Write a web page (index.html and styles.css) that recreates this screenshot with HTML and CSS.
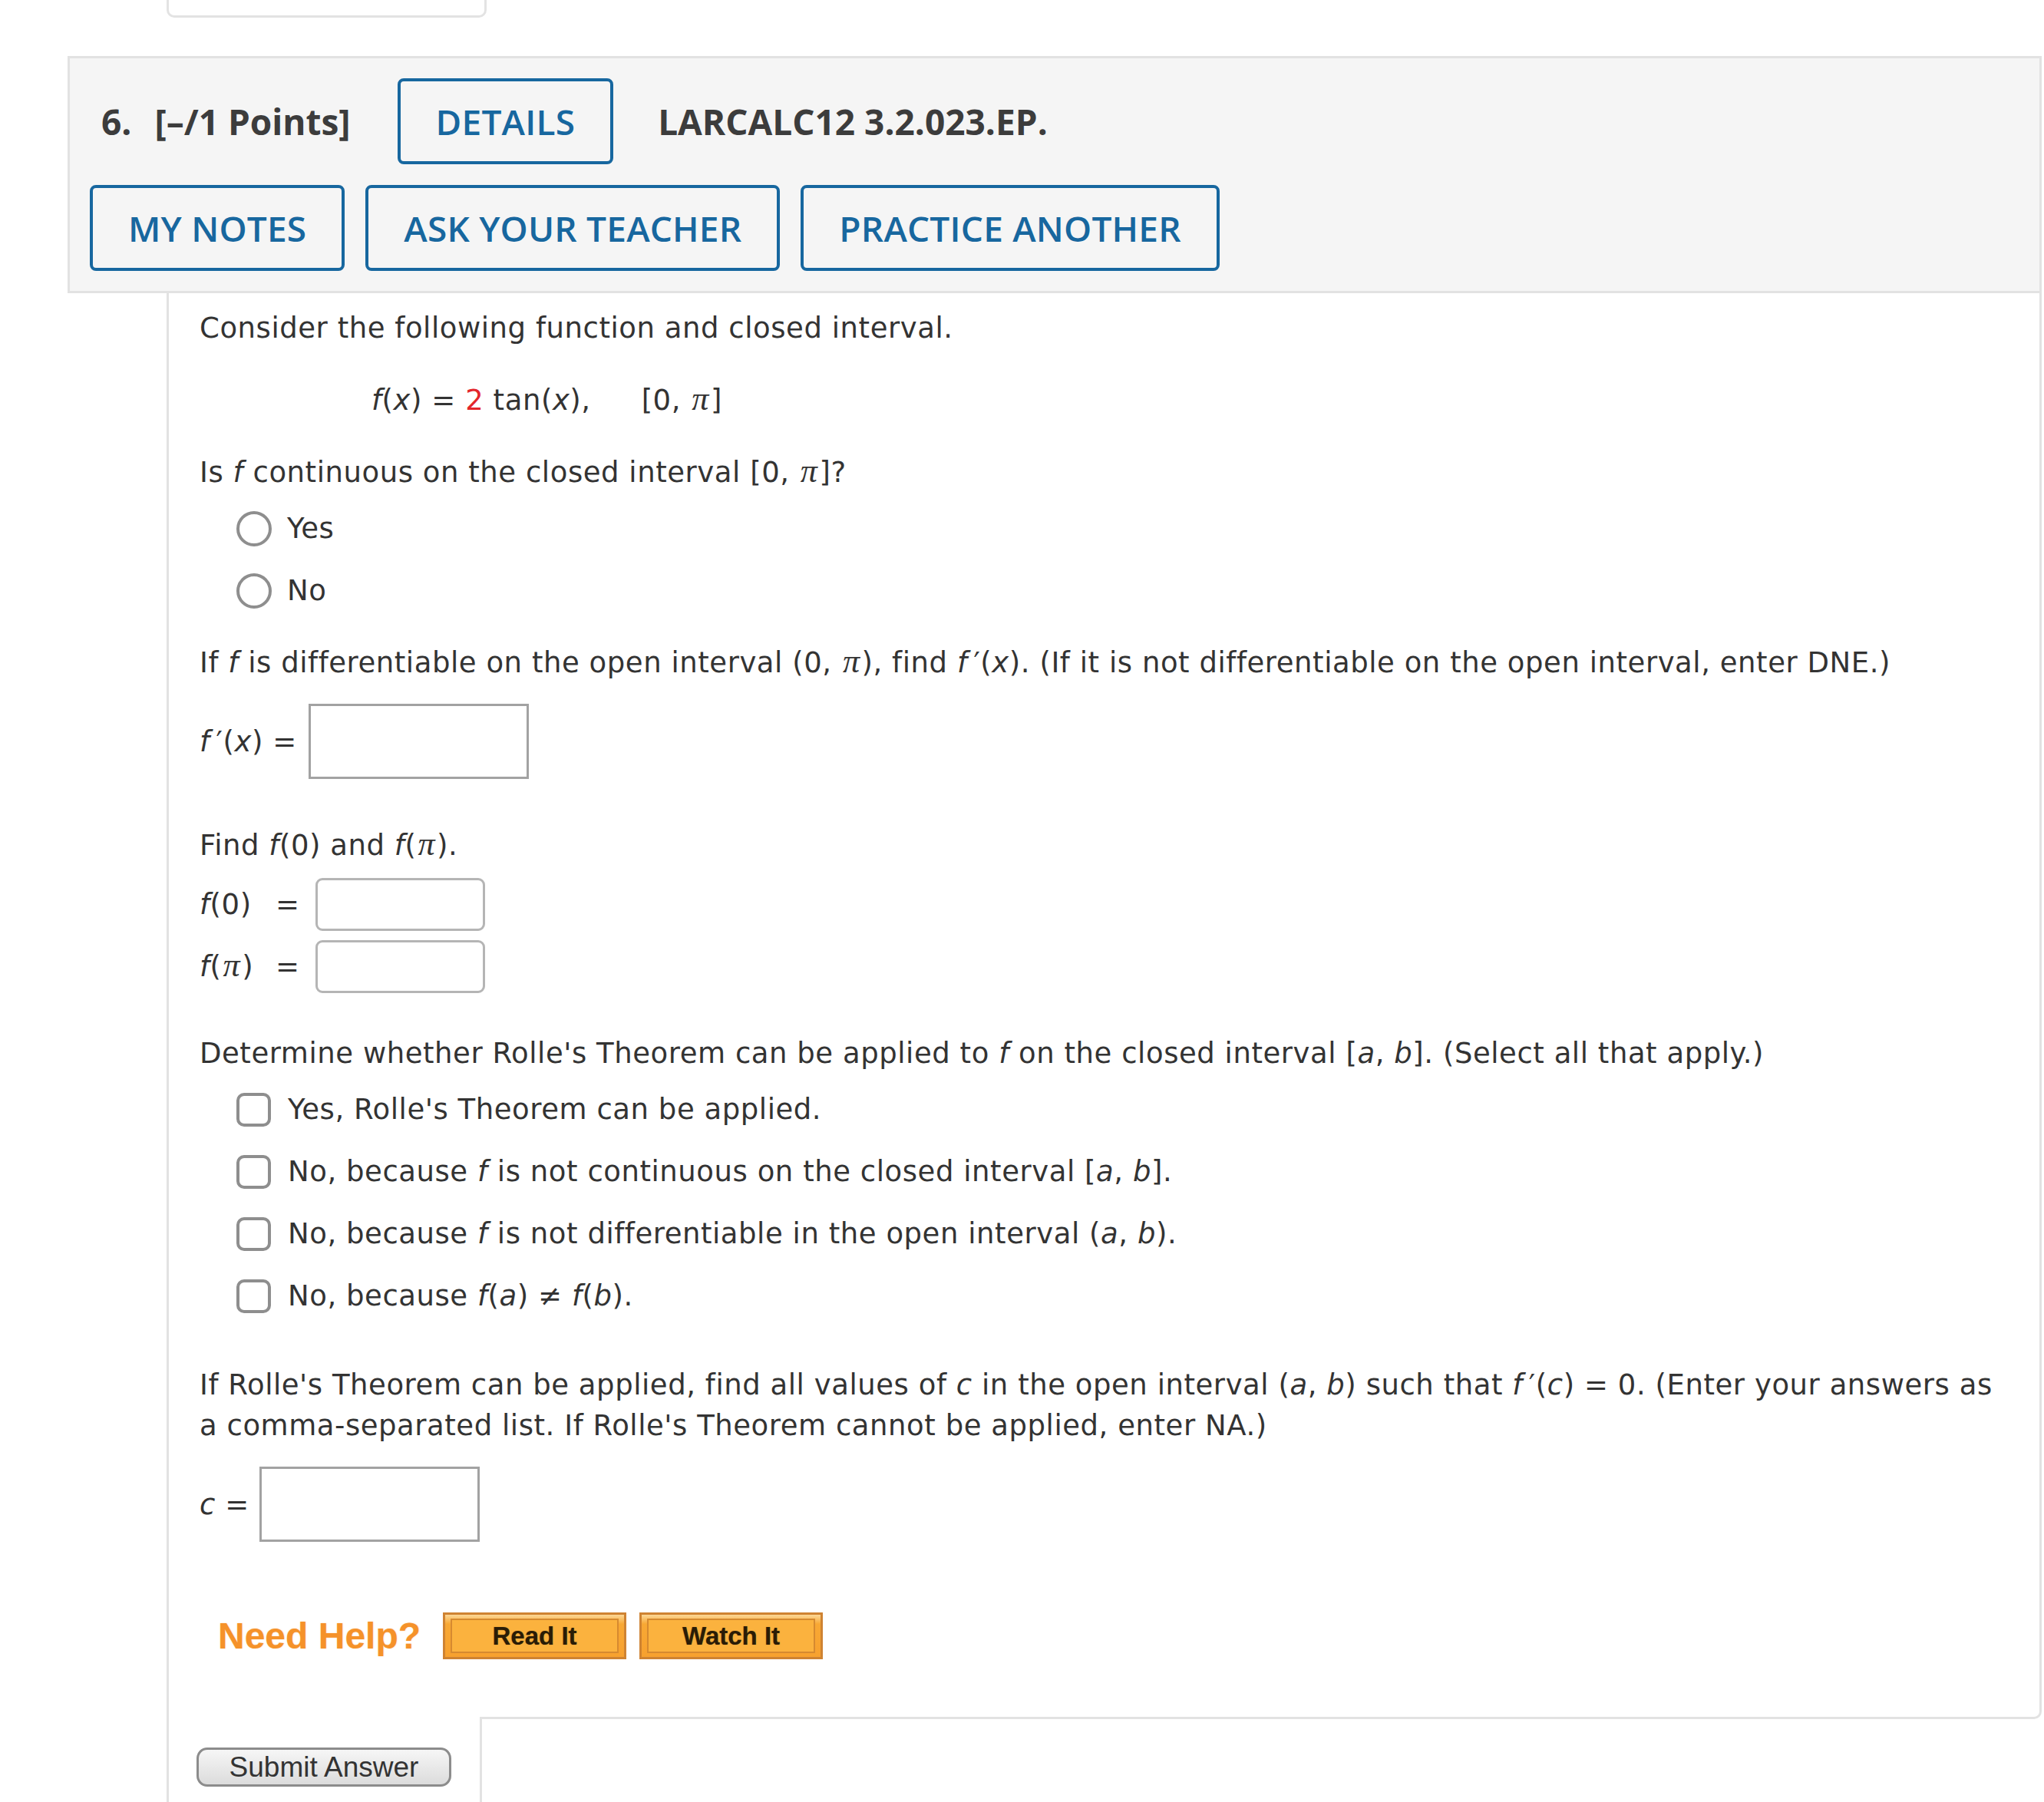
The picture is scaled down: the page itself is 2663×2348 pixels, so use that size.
FILE: index.html
```html
<!DOCTYPE html>
<html lang="en">
<head>
<meta charset="utf-8">
<title>Question 6</title>
<link rel="stylesheet" href="styles.css">
</head>
<body>
<div class="prev-tab"></div>
<div class="question">
  <div class="qhead">
    <div class="qhead-row">
      <span class="qnum">6.</span>
      <span class="qpts">[–/1 Points]</span>
      <button class="hbtn details">DETAILS</button>
      <span class="qcode">LARCALC12 3.2.023.EP.</span>
    </div>
    <div class="qhead-row actions">
      <button class="hbtn">MY NOTES</button>
      <button class="hbtn">ASK YOUR TEACHER</button>
      <button class="hbtn">PRACTICE ANOTHER</button>
    </div>
  </div>
  <div class="qbody">
    <div class="content">
      <div class="line intro">Consider the following function and closed interval.</div>
      <div class="line formula"><i>f</i>(<i>x</i>) = <span class="red">2</span> tan(<i>x</i>),<span class="sp"></span>[0, <span class="pi">π</span>]</div>
      <div class="line q">Is <i>f</i> continuous on the closed interval [0, <span class="pi">π</span>]?</div>
      <div class="choices radios">
        <label class="choice"><input type="radio" name="cont" class="radio"><span>Yes</span></label>
        <label class="choice"><input type="radio" name="cont" class="radio"><span>No</span></label>
      </div>
      <div class="line q">If <i>f</i> is differentiable on the open interval (0, <span class="pi">π</span>), find <i>f</i>&thinsp;′(<i>x</i>). (If it is not differentiable on the open interval, enter DNE.)</div>
      <div class="answer-row deriv"><span><i>f</i>&thinsp;′(<i>x</i>) =</span><input type="text" class="ans big"></div>
      <div class="line q find">Find <i>f</i>(0) and <i>f</i>(<span class="pi">π</span>).</div>
      <div class="fval-grid">
        <span class="fval-label"><span class="fn"><i>f</i>(0)</span>=</span><input type="text" class="ans small">
        <span class="fval-label"><span class="fn"><i>f</i>(<span class="pi">π</span>)</span>=</span><input type="text" class="ans small">
      </div>
      <div class="line q determine">Determine whether Rolle's Theorem can be applied to <i>f</i> on the closed interval [<i>a</i>, <i>b</i>]. (Select all that apply.)</div>
      <div class="choices checks">
        <label class="choice"><input type="checkbox" class="check"><span>Yes, Rolle's Theorem can be applied.</span></label>
        <label class="choice"><input type="checkbox" class="check"><span>No, because <i>f</i> is not continuous on the closed interval [<i>a</i>, <i>b</i>].</span></label>
        <label class="choice"><input type="checkbox" class="check"><span>No, because <i>f</i> is not differentiable in the open interval (<i>a</i>, <i>b</i>).</span></label>
        <label class="choice"><input type="checkbox" class="check"><span>No, because <i>f</i>(<i>a</i>) ≠ <i>f</i>(<i>b</i>).</span></label>
      </div>
      <div class="line q rolle">If Rolle's Theorem can be applied, find all values of <i>c</i> in the open interval (<i>a</i>, <i>b</i>) such that <i>f</i>&thinsp;′(<i>c</i>) = 0. (Enter your answers as a comma-separated list. If Rolle's Theorem cannot be applied, enter NA.)</div>
      <div class="answer-row cval"><span><i>c</i> =</span><input type="text" class="ans big"></div>
      <div class="help-row">
        <span class="need-help">Need Help?</span>
        <button class="help-btn"><span>Read It</span></button>
        <button class="help-btn"><span>Watch It</span></button>
      </div>
    </div>
    <div class="submit-tab">
      <button class="submit">Submit Answer</button>
    </div>
  </div>
</div>
</body>
</html>
```

FILE: styles.css
```css
html, body {
  margin: 0;
  padding: 0;
  background: #ffffff;
}

body {
  width: 2663px;
  overflow: hidden;
  font-family: "DejaVu Sans", Verdana, sans-serif;
  color: #333333;
}

.prev-tab {
  margin-left: 217px;
  width: 411px;
  height: 20px;
  box-sizing: content-box;
  border: 3px solid #e3e3e3;
  border-top: none;
  border-radius: 0 0 10px 10px;
}

.question {
  margin: 50px 3px 0 88px;
}

/* ---------- header ---------- */
.qhead {
  background: #f5f5f5;
  border: 3px solid #e2e2e2;
  padding: 26px;
  display: flex;
  flex-direction: column;
  gap: 27px;
  font-family: "Open Sans", "Noto Sans", sans-serif;
}

.qhead-row {
  display: flex;
  align-items: center;
}

.qhead-row:first-child {
  margin-left: 15px;
}

.qnum,
.qpts,
.qcode {
  font-size: 46px;
  font-weight: 700;
  color: #3c3c3c;
}

.qnum {
  margin-right: 30px;
}

.qpts {
  margin-right: 61px;
}

.qcode {
  margin-left: 58px;
}

.hbtn {
  height: 112px;
  box-sizing: border-box;
  padding: 0 46px;
  border: 4px solid #17679f;
  border-radius: 8px;
  background: #f5f5f5;
  color: #17679f;
  font-family: "Open Sans", "Noto Sans", sans-serif;
  font-size: 46px;
  font-weight: 600;
  letter-spacing: 0.2px;
  cursor: pointer;
}

.actions {
  gap: 27px;
}

/* ---------- body ---------- */
.qbody {
  margin-left: 129px;
}

.content {
  border: 3px solid #e2e2e2;
  border-top: none;
  border-radius: 0 0 10px 0;
  padding: 19px 40px 75px 40px;
  font-size: 37px;
  letter-spacing: 0.55px;
  line-height: 53px;
}

.content i {
  font-style: italic;
}

.pi {
  font-family: "Liberation Serif", "Times New Roman", serif;
  font-style: italic;
  font-size: 44px;
  line-height: 1;
  padding: 0 2px;
}

.red {
  color: #e3262b;
}

.line {
  margin-top: 41px;
}

.line.intro {
  margin-top: 0;
}

.formula {
  padding-left: 224px;
}

.formula .sp {
  display: inline-block;
  width: 66px;
}

.choices {
  display: flex;
  flex-direction: column;
  margin-left: 48px;
}

.radios {
  margin-top: 20px;
  gap: 28px;
}

.checks {
  margin-top: 20px;
  gap: 28px;
}

.choice {
  display: flex;
  align-items: center;
  height: 53px;
  gap: 20px;
}

.radio,
.check {
  appearance: none;
  -webkit-appearance: none;
  margin: 0;
  box-sizing: border-box;
  background: #ffffff;
  border: 4px solid #8e8e8e;
  flex: none;
}

.radio {
  width: 46px;
  height: 46px;
  border-radius: 50%;
}

.check {
  width: 45px;
  height: 44px;
  border-radius: 10px;
  margin-right: 2px;
}

.answer-row {
  display: flex;
  align-items: center;
  gap: 15px;
  margin-top: 27px;
}

.cval {
  gap: 13px;
}

.ans {
  box-sizing: border-box;
  margin: 0;
  background: #ffffff;
  font-family: "DejaVu Sans", Verdana, sans-serif;
  font-size: 36px;
}

.ans.big {
  width: 287px;
  height: 98px;
  border: 3px solid #a2a2a2;
  border-radius: 0;
}

.ans.small {
  width: 221px;
  height: 69px;
  border: 3px solid #b5b5b5;
  border-radius: 9px;
}

.find {
  margin-top: 60px;
}

.fval-grid {
  display: grid;
  grid-template-columns: 151px 221px;
  row-gap: 12px;
  align-items: center;
  margin-top: 16px;
}

.fn {
  display: inline-block;
  width: 99px;
}

.determine {
  margin-top: 52px;
}

.rolle {
  margin-top: 63px;
  margin-right: -14px;
}

/* ---------- help ---------- */
.help-row {
  display: flex;
  align-items: center;
  margin-top: 92px;
  margin-left: 24px;
  height: 61px;
}

.need-help {
  font-family: "Liberation Sans", Arial, sans-serif;
  font-weight: 700;
  font-size: 48px;
  letter-spacing: 0;
  color: #f5922a;
  text-shadow: 0 0 2px rgba(245, 146, 42, 0.35);
  margin-right: 29px;
}

.help-btn {
  width: 239px;
  height: 61px;
  box-sizing: border-box;
  margin: 0 17px 0 0;
  padding: 5px 7px;
  border: 3px solid #cf8332;
  background: linear-gradient(#fcd796 0%, #f8a834 22%, #f7a12f 100%);
  cursor: pointer;
}

.help-btn span {
  display: flex;
  align-items: center;
  justify-content: center;
  height: 100%;
  box-sizing: border-box;
  border: 2px solid #d68a30;
  background: #fbb23e;
  font-family: "Liberation Sans", Arial, sans-serif;
  font-weight: 700;
  font-size: 33px;
  letter-spacing: 0;
  color: #2a1c06;
  text-shadow: 0 0 1px rgba(40, 25, 0, 0.5);
}

/* ---------- submit ---------- */
.submit-tab {
  width: 411px;
  box-sizing: border-box;
  height: 130px;
  margin-top: -3px;
  background: #ffffff;
  border-left: 3px solid #e2e2e2;
  border-right: 3px solid #e2e2e2;
  padding: 40px 0 0 36px;
}

.submit {
  width: 332px;
  height: 51px;
  box-sizing: border-box;
  border: 3px solid #8c8c8c;
  border-radius: 14px;
  background: linear-gradient(#f6f6f6, #dcdcdc);
  font-family: "Liberation Sans", Arial, sans-serif;
  font-size: 37px;
  color: #333333;
  padding: 0;
  line-height: 44px;
  cursor: pointer;
}
```
